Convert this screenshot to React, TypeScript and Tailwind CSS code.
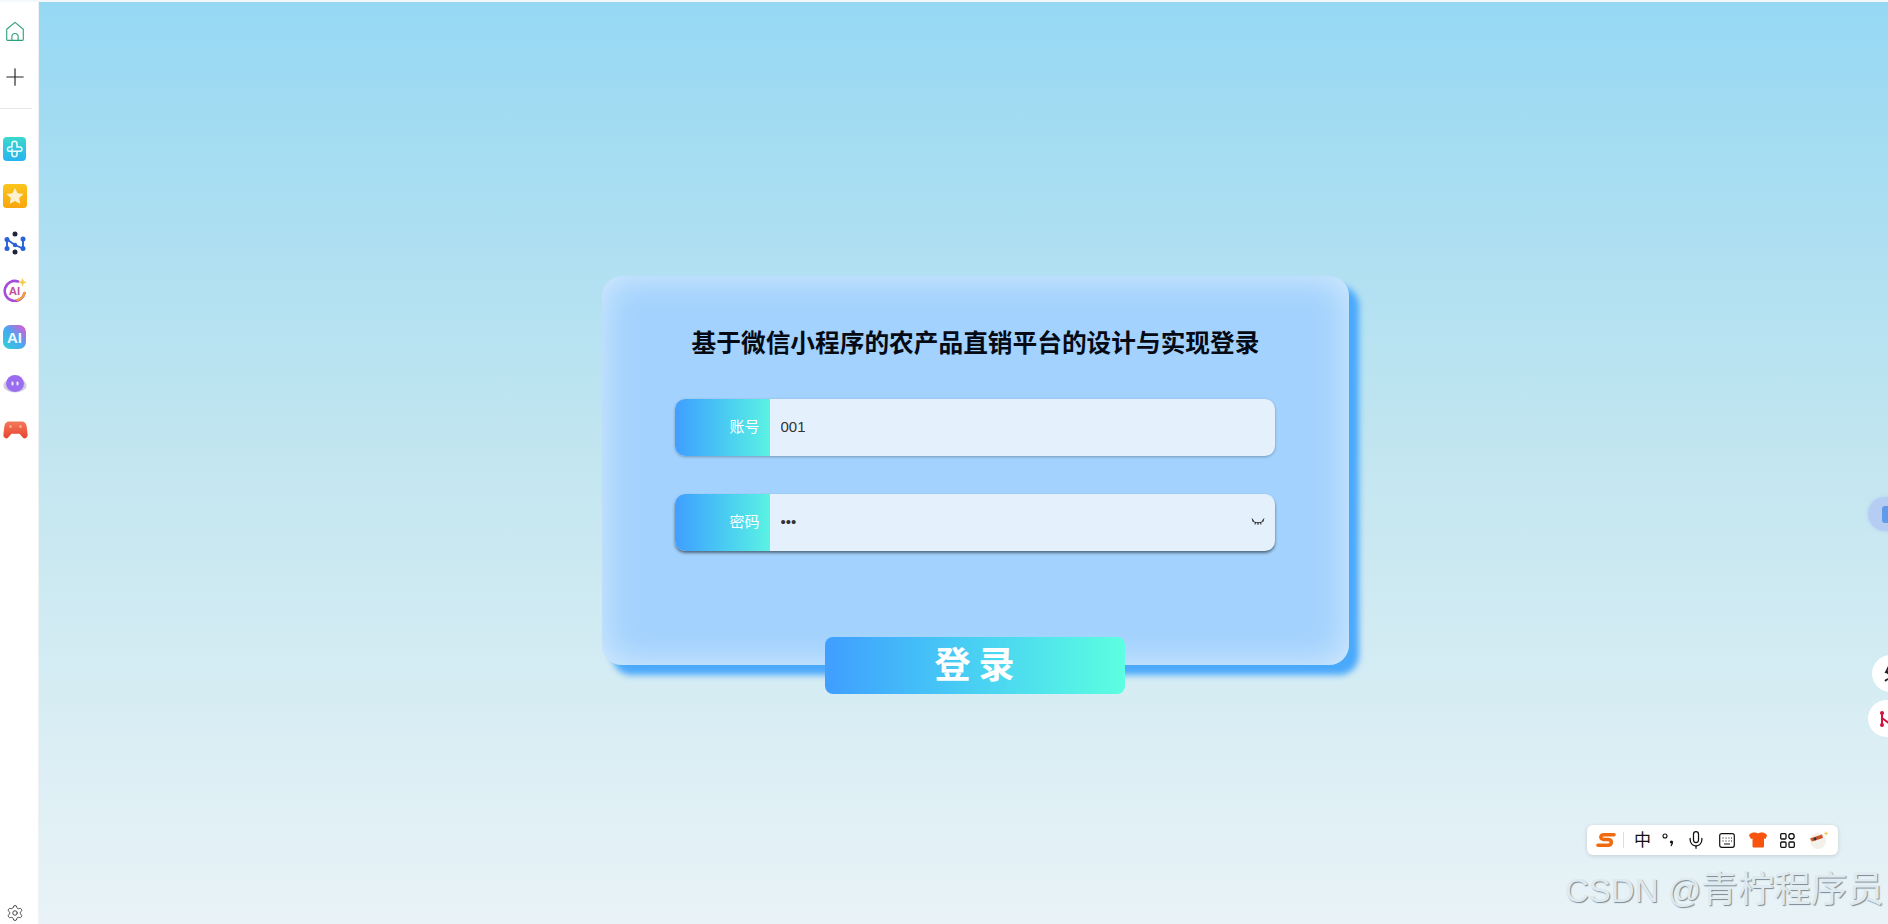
import React from 'react';
import { Plus, Settings, Mic } from 'lucide-react';

const cjk = "font-['Liberation_Sans','Noto_Sans_CJK_SC',sans-serif]";

const HomeIcon = () => (
    <svg width="20" height="21" viewBox="0 0 18 19" fill="none" stroke="#2f9e7e" strokeWidth="1">
        <path d="M1.500 7.500 9 1.200l7.500 6.300v9.200a.8.8 0 0 1-.8.8H2.300a.8.8 0 0 1-.8-.8z" strokeLinejoin="round" />
        <path d="M6.200 17.500v-3.400a2.800 2.800 0 0 1 5.600 0v3.400" />
    </svg>
);

const PlusAppIcon = () => (
    <svg width="24" height="24" viewBox="0 0 24 24">
        <defs>
            <linearGradient id="tealTile" x1="0" y1="0" x2="0" y2="1">
                <stop offset="0" stopColor="#3ad8cc" />
                <stop offset="1" stopColor="#28b4f0" />
            </linearGradient>
        </defs>
        <rect width="23" height="24" rx="4" fill="url(#tealTile)" />
        <path d="M9 10V6.800a2.500 2.500 0 0 1 5 0V10h3.300a2.200 2.200 0 0 1 0 4.300H9.500H6.200a2.200 2.200 0 0 1 0-4.300H9M14 14.300v3a2.500 2.500 0 0 1-5 0v-5" fill="none" stroke="#e8fbff" strokeWidth="1.600" strokeLinecap="round" />
    </svg>
);

const StarIcon = () => (
    <svg width="24" height="24" viewBox="0 0 24 24">
        <defs>
            <linearGradient id="starTile" x1="0" y1="0" x2="0" y2="1">
                <stop offset="0" stopColor="#fbc51c" />
                <stop offset="1" stopColor="#f8a60d" />
            </linearGradient>
        </defs>
        <rect width="24" height="24" rx="3.500" fill="url(#starTile)" />
        <path d="m12 4 2.600 5.300 5.800.8-4.200 4 1 5.700-5.200-2.800-5.200 2.800 1-5.700-4.200-4 5.800-.8z" fill="#fdf1d0" />
    </svg>
);

const GraphIcon = () => (
    <svg width="22" height="24" viewBox="0 0 22 24" fill="none">
        <path d="M3 8.500v9M3 8.500l8 5.500 8 3.500M19 8v9.500" stroke="#2a62d9" strokeWidth="1.900" />
        <circle cx="11" cy="3" r="2.500" fill="#23233a" />
        <circle cx="11" cy="21" r="2.500" fill="#23233a" />
        <circle cx="3" cy="8.500" r="2.500" fill="#2a62d9" />
        <circle cx="19" cy="8" r="2.500" fill="#2a62d9" />
        <circle cx="3" cy="17.500" r="2.500" fill="#2a62d9" />
        <circle cx="19" cy="17.500" r="2.500" fill="#2a62d9" />
        <circle cx="11" cy="14" r="2.200" fill="#2a62d9" />
    </svg>
);

const AiRingIcon = () => (
    <svg width="24" height="24" viewBox="0 0 24 24" fill="none">
        <path d="M15 3.500A10 10 0 1 0 21.500 15" stroke="#a64ddb" strokeWidth="2.600" strokeLinecap="round" />
        <path d="M21.500 15a10 10 0 0 1-7 7" stroke="#f2a33a" strokeWidth="2.600" strokeLinecap="round" />
        <path d="m19.500 0 1.200 3 3 1.200-3 1.200-1.200 3-1.200-3-3-1.200 3-1.200z" fill="#f2cf4b" />
        <text x="11.500" y="17" textAnchor="middle" fontSize="11.500" fontWeight="700" fill="#c8509a" fontFamily="Liberation Sans, sans-serif">AI</text>
    </svg>
);

const AiTileIcon = () => (
    <svg width="24" height="24" viewBox="0 0 24 24">
        <defs>
            <linearGradient id="aiTile" x1="0" y1="1" x2="1" y2="0">
                <stop offset="0" stopColor="#2fd0d8" />
                <stop offset="0.500" stopColor="#4aa8f0" />
                <stop offset="1" stopColor="#ee4fd0" />
            </linearGradient>
        </defs>
        <rect width="23" height="24" rx="7" fill="url(#aiTile)" />
        <text x="11.500" y="17.500" textAnchor="middle" fontSize="15" fontWeight="700" fill="#f4fbff" fontFamily="Liberation Sans, sans-serif">AI</text>
    </svg>
);

const BlobIcon = () => (
    <svg width="24" height="20" viewBox="0 0 24 20">
        <ellipse cx="12" cy="11.500" rx="11.500" ry="7" fill="#d2cbe4" />
        <ellipse cx="12" cy="9.500" rx="9" ry="8.500" fill="#9a6df0" />
        <rect x="8.500" y="7.500" width="2" height="4" rx="1" fill="#eee" />
        <rect x="13.500" y="7.500" width="2" height="4" rx="1" fill="#eee" />
    </svg>
);

const GamepadIcon = () => (
    <svg width="25" height="21" viewBox="0 0 25 21">
        <defs>
            <linearGradient id="padFill" x1="0" y1="0" x2="0" y2="1">
                <stop offset="0" stopColor="#f4795a" />
                <stop offset="1" stopColor="#e5452f" />
            </linearGradient>
        </defs>
        <path d="M6 1.500h13c2.500 0 4 1.500 4.600 4.500l1 8.500c.4 3-2.600 5-4.600 3.300l-3.500-4H8.500L5 17.800c-2 1.700-5-.3-4.600-3.300l1-8.500C2 3 3.500 1.500 6 1.500z" fill="url(#padFill)" />
        <circle cx="7.500" cy="6.500" r="1.200" fill="#f9b7a0" />
        <circle cx="17.500" cy="6.500" r="1.200" fill="#f9b7a0" />
    </svg>
);

const sidebarApps = [PlusAppIcon, StarIcon, GraphIcon, AiRingIcon, AiTileIcon, BlobIcon, GamepadIcon];

const Sidebar = () => (
    <aside className="w-[39px] shrink-0 bg-white border-r border-[#eef2f4] flex flex-col items-center pr-[8px]">
        <div className="h-[46px] mt-[6px] flex items-center justify-center"><HomeIcon /></div>
        <div className="h-[46px] flex items-center justify-center">
            <Plus size={28} strokeWidth={1} color="#222" />
        </div>
        <div className="w-[32px] self-start h-px bg-[#e6e6e6] mt-[8px] mb-[16px]" />
        <div className="flex flex-col">
            {sidebarApps.map((Icon, i) => (
                <div key={i} className="h-[47px] flex items-center justify-center"><Icon /></div>
            ))}
        </div>
        <div className="mt-auto h-[20px] flex items-start justify-center">
            <Settings size={18} strokeWidth={1.300} color="#444" />
        </div>
    </aside>
);

const EyeClosed = () => (
    <svg width="14" height="8" viewBox="0 0 14 8" fill="none" stroke="#222" strokeWidth="1" className="absolute right-[10px] top-[24px]">
        <path d="M1 2.500c3 3 9 3 12 0" />
        <path d="M1 .500l1.600 2.500M13 .500l-1.600 2.500M4.500 4.200 4 6.500M9.500 4.200l.5 2.300M7 4.700v2.200" />
    </svg>
);

const Field = ({ label, value, type, shadow, children }: { label: string; value: string; type: string; shadow: string; children?: React.ReactNode }) => (
    <div className={`relative flex h-[57px] w-[600px] rounded-[10px] bg-[#e5f0fd] overflow-hidden ${shadow}`}>
        <div className="w-[95px] shrink-0 bg-gradient-to-r from-[#409eff] to-[#5bf2e2] flex items-center justify-end pr-[10px] text-[15px] text-white">
            {label}
        </div>
        <input
            readOnly
            type={type}
            value={value}
            className="flex-1 min-w-0 bg-transparent px-[11px] text-[15px] text-[#333] outline-none"
        />
        {children}
    </div>
);

const LoginCard = () => (
    <div className="w-[747px] h-[389px] rounded-[20px] bg-[#a2d2fd] shadow-[10px_10px_6px_#4ba9fc,inset_0_0_36px_rgba(255,255,255,0.6)] flex flex-col items-center pt-[53px]">
        <h1 className="h-[30px] text-[24.700px] leading-[30px] font-bold text-[#050a14] whitespace-nowrap">
            基于微信小程序的农产品直销平台的设计与实现登录
        </h1>
        <div className="mt-[40px] flex flex-col gap-[38px] -translate-x-[1px]">
            <Field label="账号" value="001" type="text" shadow="shadow-[0_1px_3px_rgba(0,0,0,0.28)]" />
            <Field label="密码" value="123" type="password" shadow="shadow-[0_2px_3px_rgba(0,0,0,0.5)]">
                <EyeClosed />
            </Field>
        </div>
        <button className="mt-[86px] shrink-0 w-[300px] h-[57px] rounded-[8px] bg-gradient-to-r from-[#409eff] to-[#5cffe0] text-white text-[36px] font-bold tracking-[8px] pl-[8px] flex items-center justify-center -translate-x-[1px]">
            登录
        </button>
    </div>
);

const ImeBar = () => (
    <div className="absolute left-[1587px] top-[823px] w-[251px] h-[30px] rounded-[6px] bg-white shadow-[0_1px_4px_rgba(0,0,0,0.15)] flex items-center pl-[9px]">
        <svg width="20" height="16" viewBox="0 0 21 16" fill="none" stroke="#f26a0f" strokeWidth="3.600" strokeLinecap="round">
            <path d="M19 2.500H8.500C4 2.500 4 7 8 7.500h5c4.500.5 4 6-.5 6H2" />
        </svg>
        <div className="w-px h-[16px] bg-[#ddd] ml-[7px]" />
        <span className="ml-[10px] w-[17px] text-[17px] leading-none text-[#111]">中</span>
        <span className="ml-[8px] w-[18px] h-[16px] flex items-center justify-center">
            <svg width="12" height="14" viewBox="0 0 12 14" fill="none">
                <circle cx="3" cy="3" r="2" stroke="#111" strokeWidth="1.100" />
                <circle cx="9.500" cy="9" r="1.600" fill="#111" />
                <path d="M10.500 10 9 13" stroke="#111" strokeWidth="1.300" />
            </svg>
        </span>
        <Mic size={20} strokeWidth={1.500} color="#111" className="ml-[9px]" />
        <svg width="16" height="15" viewBox="0 0 16 15" fill="none" stroke="#111" strokeWidth="1.200" className="ml-[13px]">
            <rect x="0.700" y="0.700" width="14.600" height="13.600" rx="2" />
            <path d="M3.500 5h1M6.500 5h1M9.500 5h1M12 5h1M3.500 8h1M6.500 8h1M9.500 8h1M12 8h1M5 11h6" />
        </svg>
        <svg width="18" height="16" viewBox="0 0 18 16" className="ml-[14px]">
            <path d="M4 .500h3c.5 1 3.500 1 4 0h3c2 .500 4 2 4 3l-1.500 3.500-1.500-.5V14c0 1-.500 1.500-1.500 1.500H5c-1 0-1.500-.500-1.500-1.500V6.500L2 7 0 3.500c0-1 2-2.500 4-3z" fill="#f8540f" />
        </svg>
        <svg width="15" height="15" viewBox="0 0 15 15" fill="none" stroke="#111" strokeWidth="1.300" className="ml-[13px]">
            <rect x="0.700" y="0.700" width="5.300" height="5.300" rx="1" />
            <circle cx="11.500" cy="3.300" r="2.700" />
            <rect x="0.700" y="9" width="5.300" height="5.300" rx="1" />
            <rect x="9" y="9" width="5.300" height="5.300" rx="1" />
        </svg>
        <svg width="20" height="18" viewBox="0 0 20 18" className="ml-[14px]">
            <circle cx="9" cy="10" r="8" fill="#f4f0ea" />
            <path d="M1 7.500 13 3.500l1 3.500L3 10.500z" fill="#c9542a" />
            <circle cx="6" cy="8" r="1.400" fill="#333" />
            <path d="m17 0 .7 1.800 1.800.7-1.800.7L17 5l-.7-1.800-1.800-.7 1.800-.7z" fill="#f3cc55" />
        </svg>
    </div>
);

const Watermark = () => (
    <div className={`absolute left-[1565px] top-[868px] whitespace-nowrap leading-[40px] text-[#dfeaf0] [text-shadow:1px_1px_1px_rgba(95,110,120,0.8)] ${cjk}`}>
        <span className="text-[33px]">CSDN @</span>
        <span className="text-[36.500px]">青柠程序员</span>
    </div>
);

const EdgeButtons = () => (
    <>
        <div className="absolute left-[1868px] top-[495px] w-[36px] h-[34px] rounded-full bg-[#b5cdf3] shadow-[0_0_4px_#b5cdf3] flex items-center pl-[14px]">
            <div className="w-[10px] h-[17px] rounded-l-[3px] bg-[#5f9bea]" />
        </div>
        <div className="absolute left-[1872px] top-[653px] w-[37px] h-[37px] rounded-full bg-white flex items-center pl-[11px]">
            <svg width="14" height="18" viewBox="0 0 14 18" fill="none" stroke="#222" strokeWidth="1.800">
                <path d="M6 1 3 7h11M3 7l9 5M2 16c3-3 8-3 12-1" />
            </svg>
        </div>
        <div className="absolute left-[1868px] top-[698px] w-[37px] h-[37px] rounded-full bg-white flex items-center pl-[12px]">
            <svg width="10" height="20" viewBox="0 0 10 20" fill="none">
                <path d="M2 4v12M2 9l8 6" stroke="#d3123f" strokeWidth="2" />
                <circle cx="2" cy="4" r="2" fill="#d3123f" />
                <circle cx="2" cy="16" r="2" fill="#d3123f" />
            </svg>
        </div>
    </>
);

const App = () => {
    return (
        <div className={`relative w-[1888px] h-[924px] overflow-hidden flex border-t-2 border-[#f4f8fa] bg-[#ffffff] ${cjk}`}>
            <Sidebar />
            <main className="flex-1 bg-gradient-to-b from-[#96d8f3] via-[#c3e6f0] to-[#e9f3f7] pt-[274px] pl-[563px]">
                <LoginCard />
            </main>
            <EdgeButtons />
            <ImeBar />
            <Watermark />
        </div>
    );
};

export default App;
